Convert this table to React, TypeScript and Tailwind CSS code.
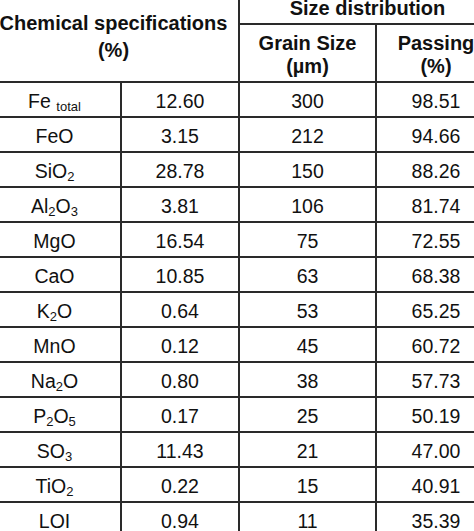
import React from 'react';

type Row = { name: React.ReactNode; value: string; size: string; passing: string };

const S = ({ children }: { children: React.ReactNode }) => (
  <sub className="text-[13px] relative -bottom-[3px] align-baseline">{children}</sub>
);

const rows: Row[] = [
  { name: <>Fe <S>total</S></>, value: '12.60', size: '300', passing: '98.51' },
  { name: 'FeO', value: '3.15', size: '212', passing: '94.66' },
  { name: <>SiO<S>2</S></>, value: '28.78', size: '150', passing: '88.26' },
  { name: <>Al<S>2</S>O<S>3</S></>, value: '3.81', size: '106', passing: '81.74' },
  { name: 'MgO', value: '16.54', size: '75', passing: '72.55' },
  { name: 'CaO', value: '10.85', size: '63', passing: '68.38' },
  { name: <>K<S>2</S>O</>, value: '0.64', size: '53', passing: '65.25' },
  { name: 'MnO', value: '0.12', size: '45', passing: '60.72' },
  { name: <>Na<S>2</S>O</>, value: '0.80', size: '38', passing: '57.73' },
  { name: <>P<S>2</S>O<S>5</S></>, value: '0.17', size: '25', passing: '50.19' },
  { name: <>SO<S>3</S></>, value: '11.43', size: '21', passing: '47.00' },
  { name: <>TiO<S>2</S></>, value: '0.22', size: '15', passing: '40.91' },
  { name: 'LOI', value: '0.94', size: '11', passing: '35.39' },
];

const cell = 'flex items-center justify-center pt-[2px] border-[#2a2a2a]';

export default function App() {
  return (
    <div
      className="w-[474px] h-[531px] overflow-hidden bg-white text-[#111]"
      style={{ fontFamily: '"Liberation Sans", Arial, sans-serif' }}
    >
      <div className="w-[506px] -ml-[11px] -mt-[7px]">
        {/* header */}
        <div className="flex h-[90px] border-b-2 border-[#2a2a2a] font-bold text-[20px]">
          <div className="w-[251px] border-r-2 border-[#2a2a2a] flex flex-col items-center justify-center leading-[27px] text-center">
            <span>Chemical specifications</span>
            <span>(%)</span>
          </div>
          <div className="w-[255px] flex flex-col">
            <div className="h-[32px] border-b-2 border-[#2a2a2a] flex items-center justify-center leading-[23px]">
              Size distribution
            </div>
            <div className="flex flex-1 leading-[23px] text-center">
              <div className="w-[137px] border-r-2 border-[#2a2a2a] flex flex-col items-center justify-center pt-[3px]">
                <span>Grain Size</span>
                <span>(µm)</span>
              </div>
              <div className="w-[118px] flex flex-col items-center justify-center pt-[3px] whitespace-nowrap">
                <span>Passing</span>
                <span>(%)</span>
              </div>
            </div>
          </div>
        </div>

        {/* data rows */}
        {rows.map((r, i) => (
          <div key={i} className="flex h-[35px] border-b-2 border-[#2a2a2a] text-[19.5px] leading-[24px]">
            <div className={`${cell} w-[133px] border-r-2`}>
              <span className="whitespace-pre">{r.name}</span>
            </div>
            <div className={`${cell} w-[118px] border-r-2`}>{r.value}</div>
            <div className={`${cell} w-[137px] border-r-2`}>{r.size}</div>
            <div className={`${cell} w-[118px]`}>{r.passing}</div>
          </div>
        ))}
      </div>
    </div>
  );
}
